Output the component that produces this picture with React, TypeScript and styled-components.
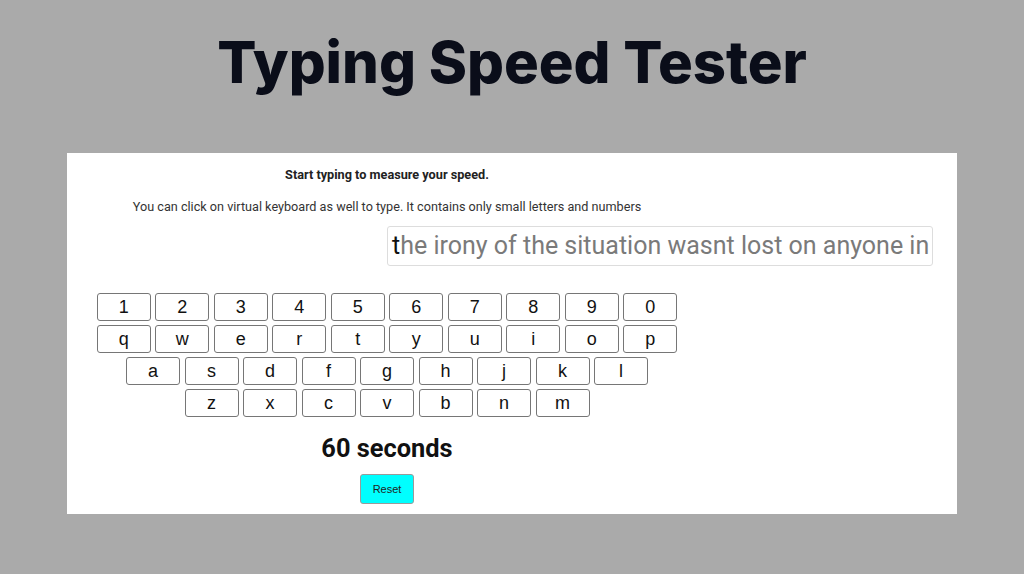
import styled, { createGlobalStyle } from "styled-components";

const GlobalStyle = createGlobalStyle`
  html, body {
    margin: 0;
    padding: 0;
    background: #aaaaaa;
  }
  body {
    font-family: Roboto, "Liberation Sans", sans-serif;
  }
`;

const Page = styled.div`
  width: 1024px;
  height: 574px;
  display: flex;
  flex-direction: column;
  align-items: center;
  background: #aaaaaa;
`;

const Title = styled.h1`
  margin: 26px 0 0;
  height: 127px;
  font-family: Inter, "Noto Sans", sans-serif;
  font-weight: 800;
  font-size: 58px;
  line-height: 72px;
  letter-spacing: 0px;
  color: #0a0d19;
`;

const Panel = styled.div`
  width: 890px;
  height: 361px;
  background: #ffffff;
  box-sizing: border-box;
  padding-top: 14px;
`;

const Column = styled.div`
  width: 640px;
  display: flex;
  flex-direction: column;
  align-items: center;
`;

const Heading = styled.p`
  margin: 0;
  font-size: 12.7px;
  line-height: 15px;
  font-weight: 700;
  color: #222;
`;

const Hint = styled.p`
  margin: 17px 0 0;
  font-size: 12.65px;
  line-height: 15px;
  color: #333;
`;

const InputRow = styled.div`
  margin-top: 12px;
  padding-left: 320px;
`;

const TextBox = styled.div`
  width: 546px;
  height: 40px;
  box-sizing: border-box;
  border: 1px solid #dddddd;
  border-radius: 3px;
  padding-left: 4px;
  overflow: hidden;
  white-space: nowrap;
  font-size: 25px;
  line-height: 38px;
  color: #7a7a7a;
`;

const Current = styled.span`
  color: #111;
`;

const Keyboard = styled.div`
  margin-top: 27px;
  width: 640px;
  display: flex;
  flex-direction: column;
  align-items: center;
  gap: 4px;
`;

const KeyRow = styled.div`
  display: flex;
  gap: 4.5px;
`;

const Key = styled.button`
  width: 54px;
  height: 28px;
  padding: 0;
  background: #ffffff;
  border: 1px solid #767676;
  border-radius: 3px;
  font-family: "Liberation Sans", Arial, sans-serif;
  font-size: 18px;
  color: #111;
  line-height: 26px;
`;

const Timer = styled.div`
  margin-top: 17px;
  font-size: 25.4px;
  line-height: 28px;
  font-weight: 700;
  color: #111;
`;

const ResetButton = styled.button`
  margin-top: 12px;
  width: 54px;
  height: 30px;
  padding: 0;
  background: #00ffff;
  border: 1px solid #9a9a9a;
  border-radius: 3px;
  font-family: "Liberation Sans", Arial, sans-serif;
  font-size: 11px;
  color: #222;
`;

const rows = ["1234567890", "qwertyuiop", "asdfghjkl", "zxcvbnm"];

export default function App() {
  return (
    <>
      <GlobalStyle />
      <Page>
        <Title>Typing Speed Tester</Title>
        <Panel>
          <Column>
            <Heading>Start typing to measure your speed.</Heading>
            <Hint>
              You can click on virtual keyboard as well to type. It contains only small letters and numbers
            </Hint>
          </Column>
          <InputRow>
            <TextBox>
              <Current>t</Current>he irony of the situation wasnt lost on anyone in
            </TextBox>
          </InputRow>
          <Keyboard>
            {rows.map((row) => (
              <KeyRow key={row}>
                {row.split("").map((k) => (
                  <Key key={k}>{k}</Key>
                ))}
              </KeyRow>
            ))}
          </Keyboard>
          <Column>
            <Timer>60 seconds</Timer>
            <ResetButton>Reset</ResetButton>
          </Column>
        </Panel>
      </Page>
    </>
  );
}
